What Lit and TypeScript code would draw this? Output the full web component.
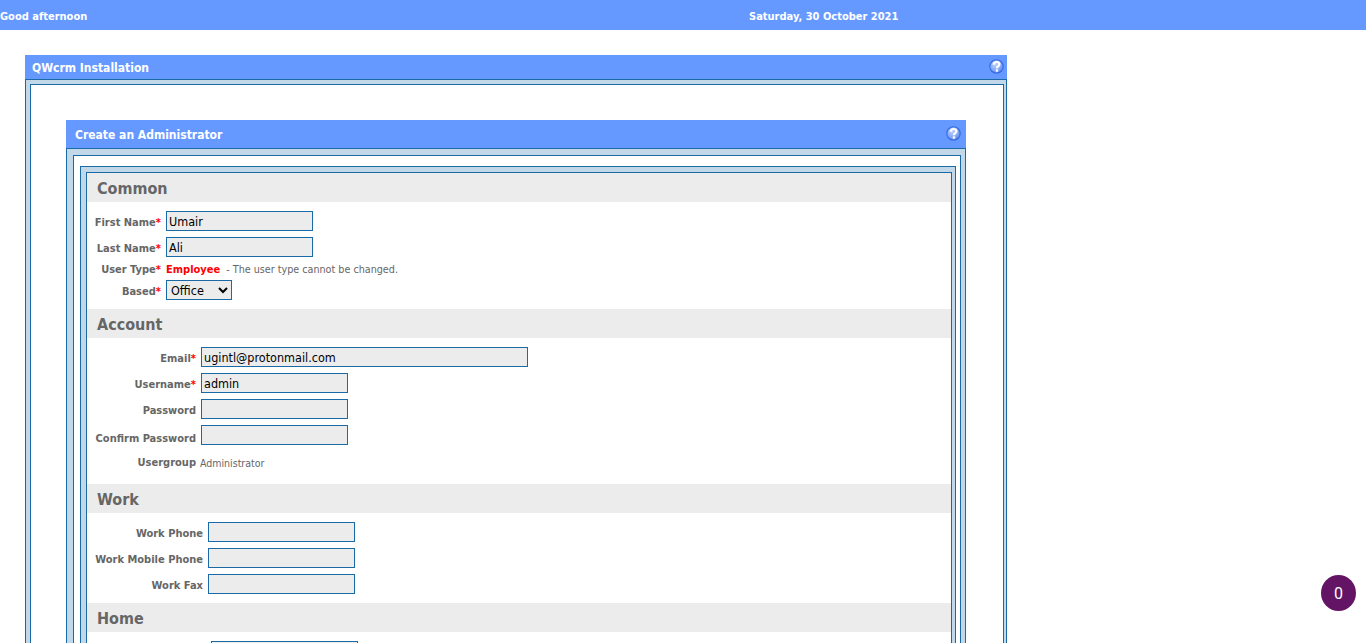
import { LitElement, html, css } from "lit";
import { customElement } from "lit/decorators.js";

const help = html`<svg class="help" width="15" height="15" viewBox="0 0 15 15">
  <defs><radialGradient id="hg" cx="42%" cy="35%" r="70%"><stop offset="0" stop-color="#bcd0fc"/><stop offset="0.6" stop-color="#86a9f7"/><stop offset="1" stop-color="#4f80ec"/></radialGradient></defs>
  <circle cx="7.5" cy="7.5" r="6.7" fill="url(#hg)" stroke="#3569e0" stroke-width="1.1"/>
  <path d="M4.7 5.7C4.8 3.9 6 3 7.6 3c1.7 0 2.8 1 2.8 2.3 0 1.2-.8 1.7-1.5 2.2-.6.4-.9.8-.9 1.7" fill="none" stroke="#fff" stroke-width="2.2"/>
  <rect x="6.8" y="10.4" width="2.3" height="2.3" fill="#fff"/>
</svg>`;

@customElement("app-root")
export class AppRoot extends LitElement {
  static styles = css`
    :host { display: block; height: 643px; overflow: hidden; background: #fff; position: relative;
      font-family: "DejaVu Sans", sans-serif; font-stretch: condensed; font-size: 11px; color: #666; }
    .top { height: 30px; background: #6699ff; color: #fff; font-weight: 700; display: grid; grid-template-columns: 749px auto; align-items: center; box-sizing: border-box; padding-top: 2px; }
    .wrap { padding: 25px 0 0 25px; width: 1007px; box-sizing: border-box; }
    .head { background: #6699ff; color: #fff; font-weight: 700; display: flex; align-items: center; justify-content: space-between; box-sizing: border-box; }
    .head span { padding-top: 2px; }
    .head.outer { height: 24px; font-size: 12px; padding: 0 3px 0 7px; }
    .head.inner { height: 28px; font-size: 12px; padding: 0 5px 0 9px; }
    .help { margin-top: -2px; }
    .frame { border: 1px solid #1a6aa5; background: #c2d7e8; }
    .outer-frame { padding: 4px 2px 4px 4px; }
    .white { border: 1px solid #1a6aa5; background: #fff; }
    .outer-white { padding: 35px 37px 0 35px; }
    .inner-frame { padding: 6px 4px 6px 6px; }
    .inner-white { padding: 10px 4px 10px 6px; }
    .card-frame { padding: 5px 3px 5px 5px; }
    .card { border: 1px solid #1a6aa5; background: #fff; }
    h2 { margin: 0; height: 29px; line-height: 31px; background: #ececec; color: #666; font-size: 16px; font-weight: 700; padding-left: 10px; }
    .form { display: grid; column-gap: 5px; row-gap: 6px; align-items: center; padding: 9px 0 9px 8px; justify-content: start; justify-items: start; }
    .c1 { grid-template-columns: 66px auto; }
    .c2 { grid-template-columns: 101px auto; }
    .c3 { grid-template-columns: 108px auto; }
    .c4 { grid-template-columns: 111px auto; }
    label { font-weight: 700; justify-self: end; white-space: nowrap; padding-top: 3px; }
    label.short { padding-top: 0; line-height: 13px; height: 11px; }
    label.cp { padding-top: 7px; }
    label i { color: #ff0000; font-style: normal; }
    .in { box-sizing: border-box; width: 147px; height: 20px; border: 1px solid #1a6aa5; background: #ececec; padding: 1px 2px 0; margin: 0; font-family: "DejaVu Sans", sans-serif; font-stretch: condensed; font-size: 12.5px; color: #000; outline: none; border-radius: 0; display: block; }
    .in.wide { width: 327px; }
    select.in { width: 66px; padding: 0; font-size: 12.5px; }
    .note { display: flex; align-items: center; gap: 6px; font-size: 10.7px; height: 11px; line-height: 13px; padding-top: 1px; box-sizing: content-box; margin-bottom: -1px; }
    .emp { color: #ff0000; font-weight: 700; font-size: 11px; }
    .tall { height: 24px; line-height: 24px; padding: 0; }
    .grp { font-size: 10.5px; margin-left: -1px; height: 24px; line-height: 24px; }
    .fab { position: absolute; left: 1321px; top: 575px; width: 35px; height: 36px; border-radius: 50%; background: #641464; color: #fff; font: 16px Roboto, sans-serif; display: flex; align-items: center; justify-content: center; }
  `;

  private row(label: string, req: boolean, value = "", cls = "", labelCls = "") {
    return html`<label class=${labelCls}>${label}${req ? html`<i>*</i>` : ""}</label><input class="in ${cls}" .value=${value} />`;
  }

  render() {
    return html`
      <div class="top"><span>Good afternoon</span><span>Saturday, 30 October 2021</span></div>
      <div class="wrap">
        <div class="head outer"><span>QWcrm Installation</span>${help}</div>
        <div class="frame outer-frame"><div class="white outer-white">
          <div class="head inner"><span>Create an Administrator</span>${help}</div>
          <div class="frame inner-frame"><div class="white inner-white">
            <div class="frame card-frame"><div class="card">
              <h2>Common</h2>
              <div class="form c1">
                ${this.row("First Name", true, "Umair")}
                ${this.row("Last Name", true, "Ali")}
                <label class="short">User Type<i>*</i></label><div class="note"><span class="emp">Employee</span><span>- The user type cannot be changed.</span></div>
                <label>Based<i>*</i></label><select class="in"><option>Office</option></select>
              </div>
              <h2>Account</h2>
              <div class="form c2">
                ${this.row("Email", true, "ugintl@protonmail.com", "wide")}
                ${this.row("Username", true, "admin")}
                ${this.row("Password", false)}
                ${this.row("Confirm Password", false, "", "", "cp")}
                <label class="tall">Usergroup</label><span class="grp">Administrator</span>
              </div>
              <h2>Work</h2>
              <div class="form c3">
                ${this.row("Work Phone", false)}
                ${this.row("Work Mobile Phone", false)}
                ${this.row("Work Fax", false)}
              </div>
              <h2>Home</h2>
              <div class="form c4">
                <span></span><input class="in" />
              </div>
            </div></div>
          </div></div>
        </div></div>
      </div>
      <div class="fab">0</div>
    `;
  }
}
